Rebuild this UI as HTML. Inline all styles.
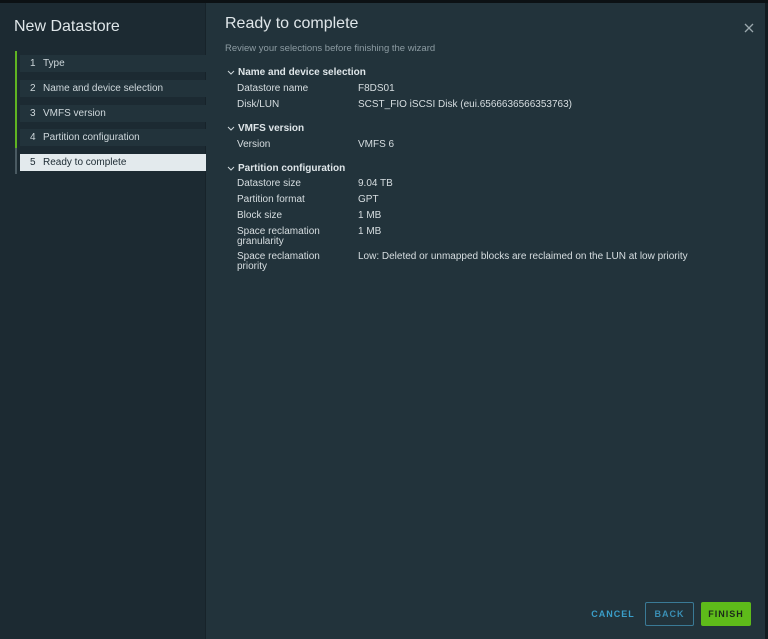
<!DOCTYPE html>
<html><head><meta charset="utf-8"><style>
*{margin:0;padding:0;box-sizing:border-box}
body{width:768px;height:639px;overflow:hidden;background:#22333b;font-family:"Liberation Sans",sans-serif;position:relative}
.top{position:absolute;left:0;top:0;width:768px;height:3px;background:#0c1114}
.left{position:absolute;left:0;top:3px;width:206px;height:636px;background:#1c2a32;border-right:1px solid #17232a}
.right{position:absolute;left:207px;top:3px;width:558px;height:636px;background:#22333b}
.edge{position:absolute;left:765px;top:3px;width:3px;height:636px;background:#121c21}
.t1{position:absolute;left:14px;top:18px;font-size:16px;color:#dfe6e9}
.bar{position:absolute;left:15px;width:2px}
.item{position:absolute;left:20px;width:186px;height:17px;background:#22333b;color:#cfd8dc;font-size:10px;line-height:18px;padding-left:10px}
.item b{font-weight:normal;display:inline-block;width:13px}
.item.sel{background:#e3eaed;color:#1c2a32}
.h{position:absolute;left:225px;top:15px;font-size:16px;color:#dfe6e9}
.sub{position:absolute;left:225px;top:43px;font-size:9.5px;color:#8d9ca3}
.sec{position:absolute;left:227px;font-size:10px;font-weight:bold;color:#dfe6e9}
.sec svg{position:absolute;left:0;top:3px}
.sec span{margin-left:11px}
.l,.v{position:absolute;font-size:10px;color:#d7dee1;line-height:10px}
.l{left:237px}.v{left:358px}
.btn{position:absolute;top:602px;height:24px;font-size:9px;font-weight:bold;letter-spacing:1px;line-height:24px;text-align:center}
</style></head><body>
<div class="top"></div>
<div class="left"></div>
<div class="right"></div>
<div class="edge"></div>
<div class="t1">New Datastore</div>
<div class="bar" style="top:51px;height:97px;background:#5fb322"></div>
<div class="bar" style="top:148px;height:26px;background:#4a5a62"></div>
<div class="item" style="top:55px"><b>1</b>Type</div>
<div class="item" style="top:80px"><b>2</b>Name and device selection</div>
<div class="item" style="top:105px"><b>3</b>VMFS version</div>
<div class="item" style="top:129px"><b>4</b>Partition configuration</div>
<div class="item sel" style="top:154px"><b>5</b>Ready to complete</div>
<div class="h">Ready to complete</div>
<svg style="position:absolute;left:744px;top:23px" width="10" height="10"><path d="M1 1L9 9M9 1L1 9" stroke="#9aa7ad" stroke-width="1.3"/></svg>
<div class="sub">Review your selections before finishing the wizard</div>
<div class="sec" style="top:67px"><svg width="8" height="6"><path d="M1 1L4 4L7 1" stroke="#cfd8dc" fill="none" stroke-width="1"/></svg><span>Name and device selection</span></div>
<div class="l" style="top:84px">Datastore name</div><div class="v" style="top:84px">F8DS01</div>
<div class="l" style="top:100px">Disk/LUN</div><div class="v" style="top:100px">SCST_FIO iSCSI Disk (eui.6566636566353763)</div>
<div class="sec" style="top:123px"><svg width="8" height="6"><path d="M1 1L4 4L7 1" stroke="#cfd8dc" fill="none" stroke-width="1"/></svg><span>VMFS version</span></div>
<div class="l" style="top:140px">Version</div><div class="v" style="top:140px">VMFS 6</div>
<div class="sec" style="top:163px"><svg width="8" height="6"><path d="M1 1L4 4L7 1" stroke="#cfd8dc" fill="none" stroke-width="1"/></svg><span>Partition configuration</span></div>
<div class="l" style="top:179px">Datastore size</div><div class="v" style="top:179px">9.04 TB</div>
<div class="l" style="top:195px">Partition format</div><div class="v" style="top:195px">GPT</div>
<div class="l" style="top:211px">Block size</div><div class="v" style="top:211px">1 MB</div>
<div class="l" style="top:227px">Space reclamation<br>granularity</div><div class="v" style="top:227px">1 MB</div>
<div class="l" style="top:252px">Space reclamation<br>priority</div><div class="v" style="top:252px">Low: Deleted or unmapped blocks are reclaimed on the LUN at low priority</div>
<div class="btn" style="left:588px;width:50px;color:#3a9ec9">CANCEL</div>
<div class="btn" style="left:645px;width:49px;border:1px solid #3a7a96;border-radius:2px;color:#3a8fb5;line-height:22px">BACK</div>
<div class="btn" style="left:701px;width:50px;background:#5ebb1a;border-radius:2px;color:#1c2a1a">FINISH</div>
</body></html>
